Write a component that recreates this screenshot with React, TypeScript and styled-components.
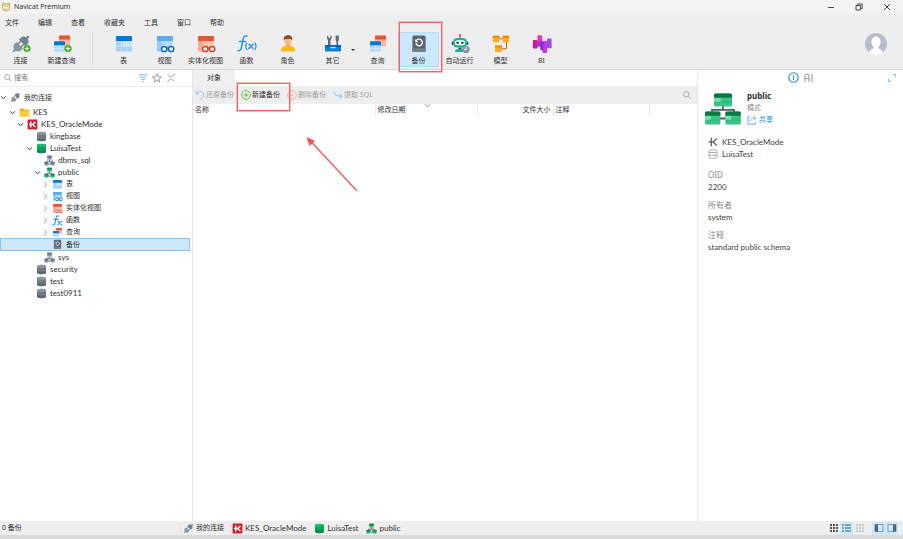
import React from "react";
import styled, { createGlobalStyle, css } from "styled-components";

const Global = createGlobalStyle`
  * { box-sizing: border-box; }
  body {
    margin: 0;
    background: #fff;
    color: #303030;
    font: 7px/12px "Noto Sans", "Noto Sans CJK SC", sans-serif;
  }
  button, input {
    font: inherit;
    color: inherit;
    border: 0;
    padding: 0;
    margin: 0;
    background: transparent;
  }
  svg { display: block; flex: none; }
`;

/* ---------- icons ---------- */

const PlugShape = () => (
  <g transform="rotate(45 10 10)" fill="#73818e">
    <path d="M5.4 8.3h9.2V5.4a4.6 4 0 0 0-9.2 0z" />
    <path d="M9 -1h2v4H9z" />
    <path d="M5.4 11.8h9.2v2.8a4.6 4 0 0 1-9.2 0z" fill="#8795a2" />
    <path d="M9 17h2v4H9z" fill="#6b93b5" />
    <path d="M7.2 8.2h1.5v3.8H7.2zM11.3 8.2h1.5v3.8h-1.500z" />
  </g>
);

const PlusBadge = () => (
  <g>
    <circle cx="16" cy="14.5" r="3.6" fill="#3fb618" />
    <path d="M16 12.5v4M14 14.5h4" stroke="#fff" strokeWidth="1.1" />
  </g>
);

const ConnectionIcon = ({ size = 20, plus = false }) => (
  <svg width={size} height={size} viewBox="0 0 20 20">
    <PlugShape />
    {plus && <PlusBadge />}
  </svg>
);

const TableShape = ({ head = "#0078d4", body = "#a6d3fa", soft = "#cfe8fd" }) => (
  <g>
    <rect x="2" y="2" width="16" height="15.5" rx="1.2" fill={body} />
    <path d="M7.3 7h10.7v5.2H7.3z" fill={soft} opacity=".75" />
    <path d="M7.3 7v10.5M12.7 7v10.5M2 12.2h16" stroke="#fff" strokeWidth=".5" opacity=".6" />
    <path d="M3.2 2h13.6A1.2 1.2 0 0 1 18 3.2V7H2V3.2A1.2 1.2 0 0 1 3.2 2z" fill={head} />
  </g>
);

const Glasses = ({ color }: { color: string }) => (
  <g fill="#fff" stroke={color} strokeWidth="1.5">
    <circle cx="9.2" cy="15" r="2.6" />
    <circle cx="16.2" cy="15" r="2.6" />
    <path d="M11.8 14.4q.9-.8 1.8 0" fill="none" />
  </g>
);

const TableIcon = ({ size = 20 }) => (
  <svg width={size} height={size} viewBox="0 0 20 20"><TableShape /></svg>
);
const ViewIcon = ({ size = 20 }) => (
  <svg width={size} height={size} viewBox="0 0 20 20">
    <TableShape head="#5cabf1" body="#8fc8fa" soft="#b9defc" />
    <Glasses color="#0c71c3" />
  </svg>
);
const MatViewIcon = ({ size = 20 }) => (
  <svg width={size} height={size} viewBox="0 0 20 20">
    <TableShape head="#e8562f" body="#ffa68d" soft="#ffc9b9" />
    <Glasses color="#d9432a" />
  </svg>
);
const FunctionIcon = ({ size = 20, short = false }) => (
  <svg width={size} height={size} viewBox="0 0 20 20" fill="none" stroke="#2795ea" strokeLinecap="round">
    {short ? (
      <>
        <path d="M1.5 18c3 1 3.6-1.6 4.3-5L7.4 5c.6-3 2-4.2 4.6-3M3.6 8h7" strokeWidth="2" />
        <path d="m11 11 6.5 7M18 11l-7.5 7" strokeWidth="2" />
      </>
    ) : (
      <>
        <path d="M1 16.5c2.4.8 3-1.2 3.6-4L6.2 5c.5-2.6 1.600-3.400 3.600-2.800M2.400 7.400h6" strokeWidth="1.5" />
        <path d="M9.800 9q-2 3.400 0 6.600M18 9q2 3.400 0 6.600" strokeWidth="1.3" />
        <path d="m12 10.200 4 4.200M16.200 10.200l-4.400 4.200" strokeWidth="1.500" />
      </>
    )}
  </svg>
);
const RoleIcon = () => (
  <svg width="20" height="20" viewBox="0 0 20 20">
    <path d="M8 9h4v4.5H8z" fill="#e9a777" />
    <path d="M3 17.6v-1.800c0-2.600 2.200-3.700 5-4q2 1.800 4 0c2.800.3 5 1.400 5 4v1.800z" fill="#fdb813" />
    <ellipse cx="10" cy="6.4" rx="3.7" ry="4.4" fill="#f3bb8d" />
    <path d="M5.8 6.500C5.300 3 7 1.300 10 1.300s4.800 1.600 4.300 5.200Q13 5.500 12.500 4.400q-3 1-5.400.3-.3 1-1.300 1.800z" fill="#8a4a1c" />
  </svg>
);
const ToolsIcon = () => (
  <svg width="20" height="20" viewBox="0 0 20 20">
    <path d="M4 2v2.400L5 6v6h2.500V6l1.200-1.600V2L7.400 1.400v2.400H5.300V1.400zM12.600 1.600h3.200v4.600l-.8 1V12h-1.600V7.200l-.8-1z" fill="#5b6b7a" />
    <path d="M2 11h16v5.400a1.200 1.200 0 0 1-1.200 1.200H3.200A1.200 1.200 0 0 1 2 16.400z" fill="#0f7fd8" />
    <path d="M2 11h16v2.300H2z" fill="#0564b0" />
    <path d="M7.400 12.800h5.200v1.400H7.400z" fill="#bfe0fb" />
  </svg>
);
const QueryIcon = ({ size = 20, plus = false }) => (
  <svg width={size} height={size} viewBox="0 0 20 20">
    <rect x="7" y="1.6" width="11" height="10.6" rx="1" fill="#ffb49e" />
    <path d="M8 1.600h9a1 1 0 0 1 1 1v3H7v-3a1 1 0 0 1 1-1z" fill="#e8562f" />
    <rect x="2" y="7.200" width="11" height="10.600" rx="1" fill="#b3dafb" />
    <path d="M3 7.200h9a1 1 0 0 1 1 1v3H2v-3a1 1 0 0 1 1-1z" fill="#0b78d0" />
    <path d="M7.500 11.200v6.600M2 14.400h11" stroke="#e8f4fe" strokeWidth=".5" />
    {plus && <PlusBadge />}
  </svg>
);
const BackupIcon = ({ size = 20 }) => (
  <svg width={size} height={size} viewBox="0 0 20 20">
    <rect x="3.400" y="1.400" width="13.200" height="16.600" rx="1.600" fill="#5a6470" />
    <path d="M3.400 14.200h13.200v2.200A1.600 1.600 0 0 1 15 18H5a1.600 1.600 0 0 1-1.600-1.600z" fill="#747e89" />
    <path d="M7.300 6.700a3.300 3.300 0 1 1-.4 2.600" fill="none" stroke="#f4f6f8" strokeWidth="1.4" />
    <path d="M6.200 5v3.200h3.200z" fill="#f4f6f8" />
  </svg>
);
const RobotIcon = () => (
  <svg width="20" height="20" viewBox="0 0 20 20">
    <path d="M10 1.800v3" stroke="#3c4a57" strokeWidth=".9" />
    <circle cx="10" cy="1.500" r="1.200" fill="#e94b35" />
    <path d="M1.800 7.500h1.400v3.600H1.800zM16.800 7.500h1.400v3.600h-1.400z" fill="#34495e" />
    <rect x="3" y="4" width="14" height="9.600" rx="4.400" fill="#17b09b" />
    <rect x="4.800" y="6.200" width="10.400" height="5" rx="2.500" fill="#fff" />
    <circle cx="7.600" cy="8.700" r="1.300" fill="#34495e" />
    <circle cx="12.400" cy="8.700" r="1.300" fill="#34495e" />
    <path d="M8.400 13.600h3.200v1.600H8.400z" fill="#34495e" />
    <path d="M5 18q0-3 3-3h5v3z" fill="#17b09b" />
    <circle cx="16" cy="15.400" r="3.700" fill="#8796a6" />
    <path d="M16.200 13v2.600h-2" fill="none" stroke="#fff" strokeWidth=".9" />
  </svg>
);
const ModelIcon = () => (
  <svg width="20" height="20" viewBox="0 0 20 20">
    <path d="M7 4.800h7M15.500 7v7.800H9" fill="none" stroke="#b86a14" strokeWidth="1" />
    <g fill="#ffad2b">
      <rect x="1.800" y="1.800" width="6.600" height="6.600" rx=".8" />
      <rect x="11.600" y="1.800" width="6.600" height="6.600" rx=".8" />
      <rect x="4" y="11.400" width="7" height="6.600" rx=".8" />
    </g>
    <path d="M1.800 1.800h6.600v2.100H1.800zM11.600 1.800h6.600v2.100h-6.600zM4 11.400h7v2.100H4z" fill="#ed8b00" />
  </svg>
);
const BiIcon = () => (
  <svg width="20" height="20" viewBox="0 0 20 20">
    <rect x=".8" y="6" width="4.800" height="8.600" rx="1" fill="#c11c9c" />
    <rect x="5.400" y="1.200" width="4.800" height="11.400" rx="1" fill="#e33bb4" />
    <rect x="5.400" y="7" width="4.800" height="5.600" rx="1" fill="#ad2bd0" />
    <rect x="10.400" y="7" width="4.800" height="12" rx="1" fill="#c13bdc" />
    <rect x="8.200" y="7.200" width="3.400" height="9" rx="1" fill="#8a30d8" />
    <rect x="15" y="4.600" width="4.600" height="9.600" rx="1" fill="#9b4bf0" />
  </svg>
);
const FolderIcon = () => (
  <svg width="11" height="11" viewBox="0 0 11 11">
    <path d="M.6 2.200A.8.8 0 0 1 1.400 1.400h2.800l1.200 1.300h4.200a.8.8 0 0 1 .8.800V5H.6z" fill="#e8a511" />
    <rect x=".6" y="3.400" width="9.800" height="6.400" rx=".8" fill="#ffcb3d" />
  </svg>
);
const KingbaseIcon = () => (
  <svg width="11" height="11" viewBox="0 0 11 11">
    <rect x=".6" y=".6" width="9.800" height="9.800" rx="1" fill="#cf1f2e" />
    <path d="M3.800 2.600v5.800M2 5.500h3.400M8.400 3 5.600 5.500l2.800 2.500" fill="none" stroke="#fff" strokeWidth="1.400" />
  </svg>
);
const DatabaseIcon = ({ open = false }) => (
  <svg width="11" height="11" viewBox="0 0 11 11">
    <path d="M1 2.400Q1 .8 5.500.8T10 2.400v6.200q0 1.600-4.500 1.600T1 8.600z" fill={open ? "#0ba35a" : "#727b84"} />
    <ellipse cx="5.500" cy="2.300" rx="4.500" ry="1.500" fill={open ? "#17bd6e" : "#9299a0"} />
    <path d="M1 6.200q0 1.400 4.500 1.400T10 6.200v2.400q0 1.600-4.500 1.600T1 8.600z" fill={open ? "#078a4b" : "#5f6871"} />
  </svg>
);
const SchemaIcon = ({ open = false }) => (
  <svg width="11" height="11" viewBox="0 0 11 11">
    <path d="M5.500 4.500v2.200M2.200 8.200V6.200h6.600v2M3.600 9h4" fill="none" stroke="#5c6a78" strokeWidth=".9" />
    <g fill={open ? "#22b573" : "#8793a0"}>
      <rect x="3.200" y=".8" width="4.600" height="3.800" rx=".5" />
      <rect x=".4" y="7" width="4" height="3.400" rx=".5" />
      <rect x="6.600" y="7" width="4" height="3.400" rx=".5" />
    </g>
    <path d="M3.200.8h4.600v1.400H3.200zM.4 7h4v1.200h-4zM6.600 7h4v1.200h-4z" fill={open ? "#058148" : "#5f6c79"} />
  </svg>
);
const LargeBox = ({ x, y, w }: { x: number; y: number; w: number }) => (
  <g>
    <rect x={x} y={y} width={w} height="13" rx="1.600" fill="#38c485" />
    <path d={`M${x} ${y + 4}h${w / 2.6}v4.600h-${w / 2.6}z`} fill="#79dfae" />
    <path d={`M${x} ${y + 8.6}h${w}`} stroke="#1fa468" strokeWidth=".5" />
    <path d={`M${x + 1.6} ${y}h${w - 3.2}q1.600 0 1.600 1.600v2.600h-${w}v-2.600q0-1.600 1.600-1.600z`} fill="#067a43" />
  </g>
);
const LargeSchemaIcon = () => (
  <svg width="36" height="32" viewBox="0 0 36 32">
    <path d="M18 13v4M7 19v-2.200h22V19M15 25.500h6" fill="none" stroke="#4d5b6c" strokeWidth="1.800" />
    <LargeBox x={9} y={0.5} w={18} />
    <LargeBox x={0} y={18.5} w={15.4} />
    <LargeBox x={20.4} y={18.5} w={15.4} />
  </svg>
);
const Chevron = ({ open }: { open: boolean }) => (
  <svg width="7" height="7" viewBox="0 0 7 7" fill="none" stroke={open ? "#444" : "#999"} strokeWidth="1">
    <path d={open ? "m1 2.200 2.500 2.600L6 2.200" : "m2.200 1 2.600 2.500L2.200 6"} />
  </svg>
);
const SearchIcon = () => (
  <svg width="8" height="8" viewBox="0 0 8 8" fill="none" stroke="#999" strokeWidth=".8">
    <circle cx="3.200" cy="3.200" r="2.600" />
    <path d="m5.200 5.200 2.400 2.400" />
  </svg>
);
const FilterIcon = () => (
  <svg width="10" height="10" viewBox="0 0 10 10" stroke="#7ab8f5" strokeWidth="1">
    <path d="M.6 1.800h8.800M2 4.200h6M3 6.400h4M4 8.600h2" />
  </svg>
);
const StarIcon = () => (
  <svg width="10" height="10" viewBox="0 0 10 10" fill="none" stroke="#888" strokeWidth=".8">
    <path d="m5 .8 1.200 2.900 3.200.2-2.500 2 .8 3.100L5 7.300 2.300 9l.8-3.100-2.500-2 3.200-.2z" />
  </svg>
);
const CollapseIcon = () => (
  <svg width="10" height="10" viewBox="0 0 10 10" fill="none" stroke="#999" strokeWidth=".9">
    <path d="m1.600 1.600 3 2.600L9 1M1.200 9l4-3.200L8.400 8.600" />
  </svg>
);
const RestoreIcon = () => (
  <svg width="10" height="10" viewBox="0 0 10 10" fill="none" stroke="#92c6ee" strokeWidth="1">
    <path d="M1.200.8v3h3M1.400 3.600C3 1 6 .8 7.600 2.400 9.600 4.400 9 8 5.400 9.200" />
  </svg>
);
const CircleIcon = ({ color, plus }: { color: string; plus: boolean }) => (
  <svg width="10" height="10" viewBox="0 0 10 10" fill="none" stroke={color} strokeWidth=".9">
    <circle cx="5" cy="5" r="4.400" />
    <path d={plus ? "M5 2.600v4.800M2.600 5h4.800" : "M2.600 5h4.800"} />
  </svg>
);
const ExtractIcon = () => (
  <svg width="10" height="10" viewBox="0 0 10 10" fill="none" stroke="#7dbdee" strokeWidth="1">
    <path d="M.8 1.400Q1 6.200 8.800 6.200M6.600 3.800 9 6.200 6.600 8.600" />
  </svg>
);
const LogoIcon = () => (
  <svg width="10" height="10" viewBox="0 0 10 10">
    <circle cx="5" cy="5.400" r="3.700" fill="#fff7dc" stroke="#c7a550" strokeWidth="1" />
    <path d="m1.400 3.800.2-2.900 2 1.200M6.400 2l2-1.300.2 3" fill="#e9c55b" stroke="#b9953f" strokeWidth=".6" />
    <path d="M3 4.400q2-1.400 4 0M3.200 6.800q1.800 1.400 3.600 0" fill="none" stroke="#d3aa3c" strokeWidth=".8" />
  </svg>
);
const WindowIcon = ({ kind }: { kind: "min" | "restore" | "close" }) => (
  <svg width="8" height="8" viewBox="0 0 8 8" fill="none" stroke="#333" strokeWidth=".9">
    {kind === "min" && <path d="M1 4.500h6" />}
    {kind === "restore" && <path d="M1 2.600h4.400V7H1zM2.600 2.400V1h4.600v4.400H5.600" />}
    {kind === "close" && <path d="m1 1 6 6M7 1 1 7" />}
  </svg>
);
const AvatarIcon = () => (
  <svg width="22" height="22" viewBox="0 0 22 22">
    <defs><clipPath id="avatar"><circle cx="11" cy="11" r="11" /></clipPath></defs>
    <g clipPath="url(#avatar)">
      <path d="M0 0h22v22H0z" fill="#b5bccb" />
      <ellipse cx="11" cy="9" rx="4.600" ry="5.800" fill="#fff" />
      <path d="M8.600 12h4.800v3.400c3 .8 4.600 2 5.200 6.600H3.400c.6-4.600 2.200-5.800 5.200-6.600z" fill="#fff" />
    </g>
  </svg>
);
const InfoIcon = () => (
  <svg width="11" height="11" viewBox="0 0 11 11" fill="none" stroke="#2a8be8" strokeWidth="1.100">
    <circle cx="5.500" cy="5.500" r="4.700" />
    <path d="M5.500 4.700v3.400M5.500 2.700v1.100" />
  </svg>
);
const AiIcon = () => (
  <svg width="10" height="10" viewBox="0 0 10 10" fill="none" stroke="#888" strokeWidth=".9">
    <path d="M1 9V3Q1 1 3 1t2 2v6M1 5.600h4M8 1v8" />
  </svg>
);
const ExpandIcon = () => (
  <svg width="8" height="8" viewBox="0 0 8 8" fill="none" stroke="#5eb2e8" strokeWidth=".9">
    <path d="M4.800.6h2.600v2.600M3.200 7.400H.6V4.800" />
  </svg>
);
const ShareIcon = () => (
  <svg width="10" height="10" viewBox="0 0 10 10" fill="none" stroke="#5eaee8" strokeWidth=".9">
    <path d="M2.800 1.600H1v7.600h7.400V6.800M3 6q.4-3 5-3M6.400 1 8.800 3 6.400 5" />
  </svg>
);
const KingbaseGlyph = () => (
  <svg width="10" height="10" viewBox="0 0 10 10" fill="none" stroke="#666" strokeWidth="1.400">
    <path d="M3.400.8v8.400M.8 5h4M8.800 1.400 5.200 5l3.600 3.600" />
  </svg>
);
const DatabaseGlyph = () => (
  <svg width="10" height="10" viewBox="0 0 10 10" fill="none" stroke="#999" strokeWidth=".8">
    <rect x="1" y=".8" width="8" height="8.400" rx="1.400" />
    <path d="M1 3.600h8M1 6.400h8" />
  </svg>
);
const LayoutIcon = ({ kind }: { kind: string }) => (
  <svg width="10" height="10" viewBox="0 0 10 10">
    {kind === "grid" && <path d="M1 2h8M1 5h8M1 8h8" stroke="#555" strokeWidth="1.800" strokeDasharray="2 1" />}
    {kind === "list" && <path d="M0 2h2M3 2h6M0 5h2M3 5h6M0 8h2M3 8h6" stroke="#6b8294" strokeWidth="1.300" />}
    {kind === "diagram" && <path d="M1 2h8M1 5h8M1 8h8" stroke="#ccc" strokeWidth="1.800" strokeDasharray="2 1" />}
    {(kind === "left" || kind === "right") && (
      <>
        <rect x="1" y="1.500" width="8" height="7" fill="none" stroke="#778b9b" strokeWidth=".8" />
        <path d={kind === "left" ? "M1 1.500h3v7H1z" : "M6 1.500h3v7H6z"} fill="#506372" />
      </>
    )}
  </svg>
);

/* ---------- layout ---------- */

const Window = styled.div`
  position: relative;
  display: flex;
  flex-direction: column;
  min-height: 100vh;
`;
const TitleBar = styled.header`
  display: flex;
  align-items: center;
  height: 14px;
  padding: 0 12px 0 1px;
  gap: 3px;
  background: #f3f3f3;
`;
const AppTitle = styled.h1`
  flex: 1;
  margin: 0;
  font-size: 7px;
  font-weight: 400;
`;
const WindowButtons = styled.div`
  display: flex;
  gap: 20px;
`;
const MenuBar = styled.nav`
  display: flex;
  align-items: center;
  height: 18px;
  padding-left: 5px;
  gap: 19px;
  background: #eee;
`;
const ToolBar = styled.div`
  display: flex;
  align-items: flex-start;
  height: 38px;
  padding-right: 16px;
  background: #eee;
  border-bottom: 1px solid #d8d8d8;
`;
const ToolButton = styled.button<{ $active?: boolean; $wide?: boolean }>`
  position: relative;
  display: flex;
  flex: none;
  flex-direction: column;
  align-items: center;
  gap: 1px;
  width: ${(p) => (p.$wide ? 49 : 41)}px;
  height: 35px;
  padding-top: 2px;
  white-space: nowrap;
  ${(p) => p.$active && css`
    background: #cce8ff;
    box-shadow: inset 0 0 0 1px #b5dcfb;
  `}
`;
const Caret = styled.span`
  position: absolute;
  right: 2px;
  top: 17px;
  border: 2px solid transparent;
  border-top-color: #333;
  border-bottom: 0;
`;
const Divider = styled.span`
  width: 1px;
  height: 34px;
  margin: 0 10px;
  background: #dcdcdc;
`;
const Account = styled.button`
  margin: 1px 0 0 auto;
`;
const Body = styled.div`
  display: flex;
  flex: 1;
`;
const Sidebar = styled.aside`
  flex: none;
  width: 193px;
  border-right: 1px solid #e6e6e6;
`;
const SearchBar = styled.div`
  display: flex;
  align-items: center;
  gap: 4px;
  height: 17px;
  padding: 0 16px 0 4px;
  border-bottom: 1px solid #eee;
`;
const SearchInput = styled.input`
  flex: 1;
  min-width: 0;
  margin-left: -2px;
  outline: 0;
  &::placeholder { color: #777; opacity: 1; }
`;
/* Latin names are set one step larger than the Chinese labels. */
const Name = styled.span`
  font-family: Lato, "Noto Sans", sans-serif;
  font-size: 8px;
`;
const Tree = styled.ul`
  list-style: none;
  margin: 0;
  padding: 2px 2px 0 0;
`;
const TreeItem = styled.button<{ $level: number; $selected?: boolean }>`
  display: flex;
  align-items: center;
  gap: 3px;
  width: 100%;
  height: ${(p) => (p.$level === 0 ? 17 : p.$selected ? 13 : 12)}px;
  padding-left: ${(p) => Math.ceil(p.$level * 8.4)}px;
  ${(p) => p.$selected && css`
    background: #cce8ff;
    box-shadow: inset 0 0 0 1px #84c3f3;
  `}
`;
const Twisty = styled.span`
  width: 7px;
`;
const Main = styled.main`
  flex: 1;
  min-width: 0;
`;
const Tab = styled.button`
  display: block;
  width: 42px;
  height: 16px;
  background: #f0f0f0;
`;
const ActionBar = styled.div`
  display: flex;
  align-items: center;
  gap: 7px;
  height: 18px;
  padding: 0 6px 0 2px;
  background: #eee;
`;
const ActionButton = styled.button`
  display: flex;
  align-items: center;
  gap: 1px;
  white-space: nowrap;
  &:disabled { color: #a0a0a0; }
`;
const Spacer = styled.span`
  flex: 1;
`;
const ObjectTable = styled.table`
  width: 100%;
  table-layout: fixed;
  border-collapse: collapse;
`;
const Column = styled.th<{ $width?: number; $end?: boolean }>`
  position: relative;
  width: ${(p) => (p.$width ? `${p.$width}px` : "auto")};
  height: 12px;
  padding: 0 2px;
  font-weight: 400;
  line-height: 12px;
  text-align: ${(p) => (p.$end ? "right" : "left")};
  border-right: ${(p) => (p.$width ? "1px solid #eaeaea" : "0")};
`;
const SortMark = styled.span`
  position: absolute;
  top: -2px;
  left: 48px;
  opacity: 0.6;
`;
const Details = styled.aside`
  flex: none;
  width: 206px;
  padding: 2px 7px 0 7px;
  border-left: 1px solid #e6e6e6;
`;
const DetailTabs = styled.div`
  display: grid;
  grid-template-columns: 1fr auto auto 1fr;
  align-items: center;
  gap: 5px;
  height: 11px;
  & > :first-child { grid-column: 2; }
  & > :last-child { justify-self: end; }
`;
const ObjectHead = styled.section`
  display: flex;
  gap: 6px;
  margin-top: 7px;
`;
const ObjectArt = styled.div`
  padding-top: 3px;
`;
const ObjectName = styled.h2`
  margin: 0;
  font-size: 8px;
  line-height: 12px;
`;
const Muted = styled.div`
  color: #888;
`;
const ShareLink = styled.a`
  display: flex;
  align-items: center;
  gap: 2px;
  color: #1489e8;
  text-decoration: none;
`;
const Facts = styled.div`
  margin-top: 10px;
  padding-left: 3px;
  color: #444;
`;
const Origin = styled.div`
  display: flex;
  align-items: center;
  gap: 4px;
`;
const FactList = styled.dl`
  margin: 9px 0 0;
`;
const FactName = styled.dt`
  color: #888;
  font-size: 8px;
  line-height: 12px;
`;
const FactValue = styled.dd`
  margin: 0 0 6px;
`;
const StatusBar = styled.footer`
  display: flex;
  align-items: center;
  height: 18px;
  padding-right: 5px;
  background: #eee;
  border-bottom: 4px solid #d9d9d9;
`;
const StatusCount = styled.div`
  width: 181px;
  padding-left: 2px;
  border-right: 1px solid #e0e0e0;
`;
const Crumbs = styled.div`
  display: flex;
  flex: 1;
  gap: 8px;
  padding-left: 2px;
`;
const Crumb = styled.button`
  display: flex;
  align-items: center;
  gap: 2px;
`;
const ViewButton = styled.button<{ $on?: boolean; $apart?: boolean }>`
  display: flex;
  align-items: center;
  justify-content: center;
  width: 13px;
  height: 13px;
  margin-left: ${(p) => (p.$apart ? 6 : 0)}px;
  background: ${(p) => (p.$on ? "#cce8ff" : "transparent")};
`;
const Highlight = styled.span<{ $x: number; $y: number; $w: number; $h: number }>`
  position: absolute;
  left: ${(p) => p.$x}px;
  top: ${(p) => p.$y}px;
  width: ${(p) => p.$w}px;
  height: ${(p) => p.$h}px;
  border: 1px solid #f8615f;
  box-shadow: 0 0 0 1px #f8615f66;
  pointer-events: none;
`;
const Pointer = styled.svg`
  position: absolute;
  left: 305px;
  top: 135px;
  pointer-events: none;
`;

/* ---------- data ---------- */

const menus = ["文件", "编辑", "查看", "收藏夹", "工具", "窗口", "帮助"];

type Tool = { label: string; icon: React.ReactNode; active?: boolean; wide?: boolean };
const tools: Tool[] = [
  { label: "表", icon: <TableIcon /> },
  { label: "视图", icon: <ViewIcon /> },
  { label: "实体化视图", icon: <MatViewIcon /> },
  { label: "函数", icon: <FunctionIcon /> },
  { label: "角色", icon: <RoleIcon /> },
  { label: "其它", icon: <ToolsIcon />, wide: true },
  { label: "查询", icon: <QueryIcon /> },
  { label: "备份", icon: <BackupIcon />, active: true },
  { label: "自动运行", icon: <RobotIcon /> },
  { label: "模型", icon: <ModelIcon /> },
  { label: "BI", icon: <BiIcon /> },
];

type Node = {
  label: string;
  level: number;
  icon: React.ReactNode;
  open?: boolean;
  selected?: boolean;
};
const nodes: Node[] = [
  { label: "我的连接", level: 0, icon: <ConnectionIcon size={11} />, open: true },
  { label: "KES", level: 1, icon: <FolderIcon />, open: true },
  { label: "KES_OracleMode", level: 2, icon: <KingbaseIcon />, open: true },
  { label: "kingbase", level: 3, icon: <DatabaseIcon /> },
  { label: "LuisaTest", level: 3, icon: <DatabaseIcon open />, open: true },
  { label: "dbms_sql", level: 4, icon: <SchemaIcon /> },
  { label: "public", level: 4, icon: <SchemaIcon open />, open: true },
  { label: "表", level: 5, icon: <TableIcon size={11} />, open: false },
  { label: "视图", level: 5, icon: <ViewIcon size={11} />, open: false },
  { label: "实体化视图", level: 5, icon: <MatViewIcon size={11} />, open: false },
  { label: "函数", level: 5, icon: <FunctionIcon size={11} short />, open: false },
  { label: "查询", level: 5, icon: <QueryIcon size={11} />, open: false },
  { label: "备份", level: 5, icon: <BackupIcon size={11} />, selected: true },
  { label: "sys", level: 4, icon: <SchemaIcon /> },
  { label: "security", level: 3, icon: <DatabaseIcon /> },
  { label: "test", level: 3, icon: <DatabaseIcon /> },
  { label: "test0911", level: 3, icon: <DatabaseIcon /> },
];
const isChineseLevel = (level: number) => level === 0 || level === 5;

const facts = [
  ["OID", "2200"],
  ["所有者", "system"],
  ["注释", "standard public schema"],
];

export default function App() {
  return (
    <Window>
      <Global />
      <TitleBar>
        <LogoIcon />
        <AppTitle>Navicat Premium</AppTitle>
        <WindowButtons>
          <button aria-label="最小化"><WindowIcon kind="min" /></button>
          <button aria-label="还原"><WindowIcon kind="restore" /></button>
          <button aria-label="关闭"><WindowIcon kind="close" /></button>
        </WindowButtons>
      </TitleBar>
      <MenuBar>
        {menus.map((m) => <button key={m}>{m}</button>)}
      </MenuBar>
      <ToolBar>
        <ToolButton><ConnectionIcon plus />连接</ToolButton>
        <ToolButton><QueryIcon plus />新建查询</ToolButton>
        <Divider />
        {tools.map((t) => (
          <ToolButton key={t.label} $active={t.active} $wide={t.wide}>
            {t.icon}
            {t.label}
            {t.wide && <Caret />}
          </ToolButton>
        ))}
        <Account aria-label="账户"><AvatarIcon /></Account>
      </ToolBar>
      <Body>
        <Sidebar>
          <SearchBar>
            <SearchIcon />
            <SearchInput aria-label="搜索" placeholder="搜索" />
            <button aria-label="筛选"><FilterIcon /></button>
            <button aria-label="收藏"><StarIcon /></button>
            <button aria-label="折叠"><CollapseIcon /></button>
          </SearchBar>
          <Tree>
            {nodes.map((n) => (
              <li key={n.label}>
                <TreeItem $level={n.level} $selected={n.selected}>
                  <Twisty>{n.open !== undefined && <Chevron open={n.open} />}</Twisty>
                  {n.icon}
                  {isChineseLevel(n.level) ? n.label : <Name>{n.label}</Name>}
                </TreeItem>
              </li>
            ))}
          </Tree>
        </Sidebar>
        <Main>
          <Tab>对象</Tab>
          <ActionBar>
            <ActionButton disabled><RestoreIcon />还原备份</ActionButton>
            <ActionButton><CircleIcon color="#55b939" plus />新建备份</ActionButton>
            <ActionButton disabled><CircleIcon color="#f4a9a4" plus={false} />删除备份</ActionButton>
            <ActionButton disabled><ExtractIcon />提取 SQL</ActionButton>
            <Spacer />
            <button aria-label="查找"><SearchIcon /></button>
          </ActionBar>
          <ObjectTable>
            <thead>
              <tr>
                <Column $width={182}>名称</Column>
                <Column $width={102}>修改日期<SortMark><Chevron open /></SortMark></Column>
                <Column $width={76} $end>文件大小</Column>
                <Column $width={96}>注释</Column>
                <Column as="td" />
              </tr>
            </thead>
          </ObjectTable>
        </Main>
        <Details>
          <DetailTabs>
            <button aria-label="信息"><InfoIcon /></button>
            <button aria-label="AI"><AiIcon /></button>
            <button aria-label="展开"><ExpandIcon /></button>
          </DetailTabs>
          <ObjectHead>
            <ObjectArt><LargeSchemaIcon /></ObjectArt>
            <div>
              <ObjectName>public</ObjectName>
              <Muted>模式</Muted>
              <ShareLink href="#share"><ShareIcon />共享</ShareLink>
            </div>
          </ObjectHead>
          <Facts>
            <Origin><KingbaseGlyph /><Name>KES_OracleMode</Name></Origin>
            <Origin><DatabaseGlyph /><Name>LuisaTest</Name></Origin>
            <FactList>
              {facts.map(([name, value]) => (
                <div key={name}>
                  <FactName>{name}</FactName>
                  <Name as={FactValue}>{value}</Name>
                </div>
              ))}
            </FactList>
          </Facts>
        </Details>
      </Body>
      <StatusBar>
        <StatusCount>0 备份</StatusCount>
        <Crumbs>
          <Crumb><ConnectionIcon size={11} />我的连接</Crumb>
          <Crumb><KingbaseIcon /><Name>KES_OracleMode</Name></Crumb>
          <Crumb><DatabaseIcon open /><Name>LuisaTest</Name></Crumb>
          <Crumb><SchemaIcon open /><Name>public</Name></Crumb>
        </Crumbs>
        <ViewButton aria-label="图标"><LayoutIcon kind="grid" /></ViewButton>
        <ViewButton aria-label="列表" $on><LayoutIcon kind="list" /></ViewButton>
        <ViewButton aria-label="图表"><LayoutIcon kind="diagram" /></ViewButton>
        <ViewButton aria-label="左侧窗格" $on $apart><LayoutIcon kind="left" /></ViewButton>
        <ViewButton aria-label="右侧窗格" $on><LayoutIcon kind="right" /></ViewButton>
      </StatusBar>
      <Highlight $x={399} $y={22} $w={43} $h={50} />
      <Highlight $x={237} $y={83} $w={53} $h={28} />
      <Pointer width="54" height="58" viewBox="0 0 54 58">
        <path d="M5 5.500 52 56" stroke="#f8615f" strokeWidth="1.500" />
        <path d="m1.500 2 8.500 4-5.500 5z" fill="#f8504e" />
      </Pointer>
    </Window>
  );
}
